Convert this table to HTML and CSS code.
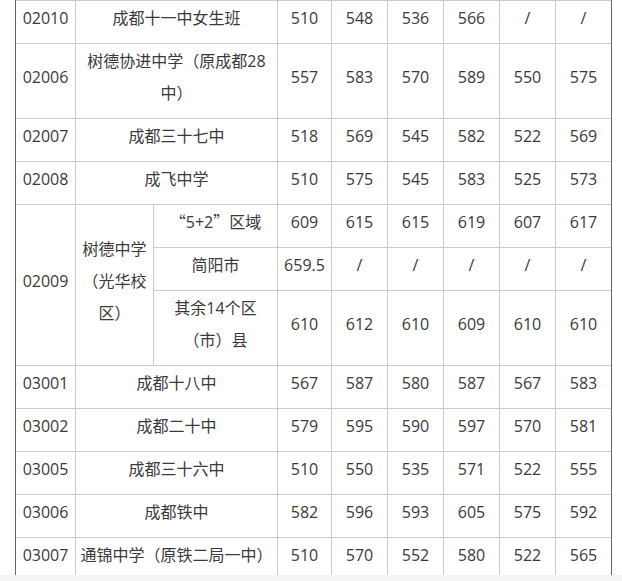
FILE: index.html
```html
<!DOCTYPE html>
<html lang="zh-CN">
<head>
<meta charset="utf-8">
<title>录取分数线</title>
<link rel="stylesheet" href="styles.css">
</head>
<body>
<div class="frame">
  <table class="score">
    <colgroup>
      <col class="c-code"><col class="c-name"><col class="c-area">
      <col class="c-n1"><col class="c-n"><col class="c-n"><col class="c-n"><col class="c-n"><col class="c-last">
    </colgroup>
    <tbody>
      <tr><td>02010</td><td colspan="2">成都十一中女生班</td><td>510</td><td>548</td><td>536</td><td>566</td><td>/</td><td>/</td></tr>
      <tr><td>02006</td><td colspan="2">树德协进中学（原成都28中）</td><td>557</td><td>583</td><td>570</td><td>589</td><td>550</td><td>575</td></tr>
      <tr><td>02007</td><td colspan="2">成都三十七中</td><td>518</td><td>569</td><td>545</td><td>582</td><td>522</td><td>569</td></tr>
      <tr><td>02008</td><td colspan="2">成飞中学</td><td>510</td><td>575</td><td>545</td><td>583</td><td>525</td><td>573</td></tr>
      <tr><td rowspan="3">02009</td><td rowspan="3">树德中学（光华校区）</td><td><span class="q">“</span>5+2<span class="q">”</span>区域</td><td>609</td><td>615</td><td>615</td><td>619</td><td>607</td><td>617</td></tr>
      <tr><td>简阳市</td><td>659.5</td><td>/</td><td>/</td><td>/</td><td>/</td><td>/</td></tr>
      <tr><td>其余14个区（市）县</td><td>610</td><td>612</td><td>610</td><td>609</td><td>610</td><td>610</td></tr>
      <tr><td>03001</td><td colspan="2">成都十八中</td><td>567</td><td>587</td><td>580</td><td>587</td><td>567</td><td>583</td></tr>
      <tr><td>03002</td><td colspan="2">成都二十中</td><td>579</td><td>595</td><td>590</td><td>597</td><td>570</td><td>581</td></tr>
      <tr><td>03005</td><td colspan="2">成都三十六中</td><td>510</td><td>550</td><td>535</td><td>571</td><td>522</td><td>555</td></tr>
      <tr><td>03006</td><td colspan="2">成都铁中</td><td>582</td><td>596</td><td>593</td><td>605</td><td>575</td><td>592</td></tr>
      <tr><td>03007</td><td colspan="2">通锦中学（原铁二局一中）</td><td>510</td><td>570</td><td>552</td><td>580</td><td>522</td><td>565</td></tr>
    </tbody>
  </table>
</div>
<div class="strip"></div>
</body>
</html>
```
FILE: styles.css
```css
html, body {
  margin: 0;
  padding: 0;
  background: #fff;
  overflow: hidden;
}

.frame {
  margin-left: 15px;
  width: 595px;
  height: 575px;
  border-left: 1px solid #666;
  border-right: 1px solid #666;
  overflow: hidden;
}

.score {
  width: 595px;
  table-layout: fixed;
  border-collapse: separate;
  border-spacing: 0;
  border-top: 1px solid #ccc;
  font-family: "Open Sans", "Noto Sans CJK SC", sans-serif;
  font-size: 16px;
  line-height: 32px;
  color: #3a3a3a;
}

.c-code { width: 60px; }
.c-name { width: 78px; }
.c-area { width: 124px; }
.c-n1 { width: 54px; }
.c-n { width: 56px; }
.c-last { width: 55px; }

.score td {
  height: 32px;
  padding: 1px 4px 9px;
  text-align: center;
  vertical-align: middle;
  border-right: 1px solid #ccc;
  border-bottom: 1px solid #ccc;
}

.score td:last-child {
  border-right: none;
}

.q {
  font-family: "Noto Sans CJK SC", sans-serif;
  line-height: 16px;
}

.strip {
  height: 6px;
  background: #f4f4f4;
}
```
